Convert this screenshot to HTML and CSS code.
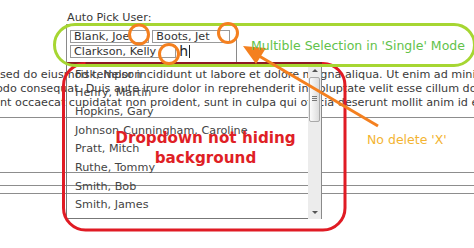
FILE: index.html
```html
<!DOCTYPE html>
<html lang="en">
<head>
<meta charset="utf-8">
<title>Auto Pick User</title>
<link rel="stylesheet" href="styles.css">
</head>
<body>
<div class="page">
  <div class="field">
    <div class="label">Auto Pick User:</div>
    <div class="picker">
      <span class="token">Blank, Joe</span>
      <span class="token">Boots, Jet</span>
      <span class="token">Clarkson, Kelly</span>
      <span class="typed">h<span class="caret"></span></span>
    </div>
  </div>
  <div class="lorem">
    <div class="line">sed do eiusmod tempor incididunt ut labore et dolore magna aliqua. Ut enim ad minim veniam,</div>
    <div class="line shift">odo consequat. Duis aute irure dolor in reprehenderit in voluptate velit esse cillum dolore</div>
    <div class="line">nt occaecat cupidatat non proident, sunt in culpa qui officia deserunt mollit anim id est</div>
  </div>
  <div class="rows">
    <div class="row r1"></div>
    <div class="row r2"></div>
    <div class="row r3"></div>
    <div class="row r4"></div>
  </div>
  <div class="dropdown">
    <ul class="options">
      <li>Fisk, Nelson</li>
      <li>Henry, Martin</li>
      <li>Hopkins, Gary</li>
      <li>Johnson-Cunningham, Caroline</li>
      <li>Pratt, Mitch</li>
      <li>Ruthe, Tommy</li>
      <li>Smith, Bob</li>
      <li>Smith, James</li>
    </ul>
    <div class="scrollbar">
      <span class="sb-up"></span>
      <span class="thumb"><span class="grip"></span></span>
      <span class="sb-down"></span>
    </div>
  </div>
  <svg class="marks" width="474" height="248" viewBox="0 0 474 248">
    <path class="red" d="M322 63.5 H323 A22 22 0 0 1 345 85.5 V208 A22 22 0 0 1 323 230 H85.5 A22 22 0 0 1 63.5 208 V85.5 A22 22 0 0 1 85.5 63.5"/>
    <rect class="green" x="54.5" y="24.5" width="420" height="41" rx="20.5"/>
    <circle class="ring" cx="139" cy="34.5" r="9.5"/>
    <circle class="ring" cx="228" cy="33" r="9.5"/>
    <circle class="ring" cx="169" cy="54" r="9.5"/>
    <line class="shaft" x1="378" y1="126" x2="254" y2="53"/>
    <polygon class="head" points="243,46 256,64 266,48"/>
  </svg>
  <div class="note note-mode">Multible Selection in 'Single' Mode</div>
  <div class="note note-x">No delete 'X'</div>
  <div class="note note-alert">Dropdown not hiding<br>background</div>
</div>
</body>
</html>
```
FILE: styles.css
```css
* { box-sizing: border-box; }
html, body { margin: 0; padding: 0; background: #fff; }
body {
  font-family: "DejaVu Sans", Verdana, sans-serif;
  font-size: 11.2px;
  color: #3a3a3a;
}
.page {
  position: relative;
  width: 474px;
  height: 248px;
  overflow: hidden;
}
.field { padding: 11px 0 0 66px; }
.label { line-height: 13px; padding-left: 1px; }
.picker {
  width: 171px;
  height: 39px;
  border: 1px solid #8a8a8a;
  padding: 5px 0 0 3px;
  display: flex;
  flex-wrap: wrap;
  align-content: flex-start;
  align-items: center;
  gap: 2px 3px;
}
.token {
  height: 13px;
  line-height: 11px;
  border: 1px solid #9a9a9a;
  padding: 0 19px 0 3px;
  white-space: nowrap;
  color: #333;
}
.typed {
  display: flex;
  align-items: center;
  font-size: 14px;
  line-height: 13px;
  color: #222;
}
.caret { width: 1px; height: 13px; background: #222; margin-left: 1px; }

.lorem { margin-top: 5px; white-space: nowrap; }
.line { line-height: 14px; }
.line.shift { margin-left: -4px; }

.rows { margin-top: 7px; }
.row { border-top: 1px solid #8d8d8d; }
.r1 { height: 55px; }
.r2 { height: 13px; }
.r3 { height: 8px; }

.dropdown {
  position: absolute;
  left: 66px;
  top: 62px;
  width: 256px;
  height: 157px;
  border-top: 3px solid #8e1b22;
  border-left: 1px solid #777;
  border-bottom: 1px solid #777;
}
.options {
  list-style: none;
  margin: 0;
  padding: 0.6px 0 0 8px;
}
.options li {
  height: 18.7px;
  line-height: 18.7px;
  color: #444;
  white-space: nowrap;
}
.scrollbar {
  position: absolute;
  top: 0;
  right: 0;
  bottom: -1px;
  width: 14px;
  background: #ececec;
  border-right: 1px solid #8a8a8a;
}
.sb-up, .sb-down {
  position: absolute;
  left: 4px;
  width: 0;
  height: 0;
  border-left: 3px solid transparent;
  border-right: 3px solid transparent;
}
.sb-up { top: 4px; border-bottom: 3px solid #555; }
.sb-down { bottom: 5px; border-top: 3px solid #555; }
.thumb {
  position: absolute;
  top: 12px;
  left: 1px;
  width: 11px;
  height: 45px;
  border: 1px solid #a9a9a9;
  border-radius: 2px;
  background: linear-gradient(to right, #fbfbfb, #dcdcdc);
}
.grip {
  position: absolute;
  left: 2px;
  right: 2px;
  top: 18px;
  height: 5px;
  border-top: 1px solid #777;
  border-bottom: 1px solid #777;
}
.grip::after {
  content: "";
  position: absolute;
  left: 0;
  right: 0;
  top: 1px;
  border-top: 1px solid #777;
}

.marks { position: absolute; left: 0; top: 0; pointer-events: none; }
.marks .red { fill: none; stroke: #e01b24; stroke-width: 3; }
.marks .green { fill: none; stroke: #a6d632; stroke-width: 3; }
.marks .ring { fill: none; stroke: #f4801f; stroke-width: 3; }
.marks .shaft { stroke: #f4801f; stroke-width: 3; }
.marks .head { fill: #f4801f; }

.note { position: absolute; white-space: nowrap; }
.note-mode {
  left: 251px;
  top: 38px;
  font-size: 12.5px;
  line-height: 15px;
  color: #62c24a;
}
.note-x {
  left: 367px;
  top: 132px;
  font-size: 12.5px;
  line-height: 15px;
  color: #f3b431;
}
.note-alert {
  left: 105px;
  top: 128px;
  width: 201px;
  text-align: center;
  font-weight: bold;
  font-size: 15.2px;
  line-height: 20px;
  color: #df1f26;
}
```
